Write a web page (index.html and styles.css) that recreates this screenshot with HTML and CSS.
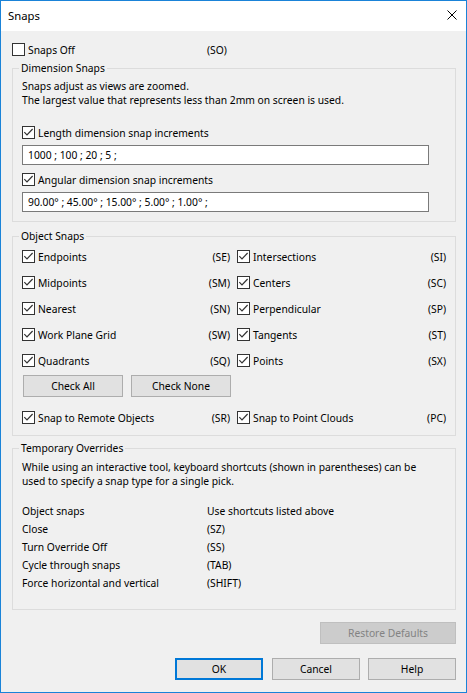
FILE: index.html
```html
<!DOCTYPE html>
<html>
<head>
<meta charset="utf-8">
<title>Snaps</title>
<link rel="stylesheet" href="styles.css">
</head>
<body>
<div class="window">
  <div class="titlebar">
    <span class="title">Snaps</span>
    <svg class="close" width="10" height="10" viewBox="0 0 10 10"><path d="M0.5 0.5L9.5 9.5M9.5 0.5L0.5 9.5" stroke="#000" stroke-width="1" fill="none"/></svg>
  </div>
  <div class="content">
    <div class="top-row">
      <label class="check wide"><svg class="cb" width="13" height="13" viewBox="0 0 13 13"><rect x="0.5" y="0.5" width="12" height="12" fill="#fff" stroke="#333"/></svg><span>Snaps Off</span></label>
      <span class="sc">(SO)</span>
    </div>

    <fieldset class="group dim">
      <legend>Dimension Snaps</legend>
      <p class="note">Snaps adjust as views are zoomed.<br>The largest value that represents less than 2mm on screen is used.</p>
      <label class="check cb-row first"><svg class="cb" width="13" height="13" viewBox="0 0 13 13"><rect x="0.5" y="0.5" width="12" height="12" fill="#fff" stroke="#333"/><path d="M2.3 6.2L5 9L10.6 3" stroke="#333" stroke-width="1.2" fill="none"/></svg><span>Length dimension snap increments</span></label>
      <div class="field">1000 ; 100 ; 20 ; 5 ;</div>
      <label class="check cb-row second"><svg class="cb" width="13" height="13" viewBox="0 0 13 13"><rect x="0.5" y="0.5" width="12" height="12" fill="#fff" stroke="#333"/><path d="M2.3 6.2L5 9L10.6 3" stroke="#333" stroke-width="1.2" fill="none"/></svg><span>Angular dimension snap increments</span></label>
      <div class="field">90.00° ; 45.00° ; 15.00° ; 5.00° ; 1.00° ;</div>
    </fieldset>

    <fieldset class="group obj">
      <legend>Object Snaps</legend>
      <div class="snap-grid">
        <div class="snap"><svg class="cb" width="13" height="13" viewBox="0 0 13 13"><rect x="0.5" y="0.5" width="12" height="12" fill="#fff" stroke="#333"/><path d="M2.3 6.2L5 9L10.6 3" stroke="#333" stroke-width="1.2" fill="none"/></svg><span class="lbl">Endpoints</span><span class="sc">(SE)</span></div>
        <div class="snap"><svg class="cb" width="13" height="13" viewBox="0 0 13 13"><rect x="0.5" y="0.5" width="12" height="12" fill="#fff" stroke="#333"/><path d="M2.3 6.2L5 9L10.6 3" stroke="#333" stroke-width="1.2" fill="none"/></svg><span class="lbl">Intersections</span><span class="sc">(SI)</span></div>
        <div class="snap"><svg class="cb" width="13" height="13" viewBox="0 0 13 13"><rect x="0.5" y="0.5" width="12" height="12" fill="#fff" stroke="#333"/><path d="M2.3 6.2L5 9L10.6 3" stroke="#333" stroke-width="1.2" fill="none"/></svg><span class="lbl">Midpoints</span><span class="sc">(SM)</span></div>
        <div class="snap"><svg class="cb" width="13" height="13" viewBox="0 0 13 13"><rect x="0.5" y="0.5" width="12" height="12" fill="#fff" stroke="#333"/><path d="M2.3 6.2L5 9L10.6 3" stroke="#333" stroke-width="1.2" fill="none"/></svg><span class="lbl">Centers</span><span class="sc">(SC)</span></div>
        <div class="snap"><svg class="cb" width="13" height="13" viewBox="0 0 13 13"><rect x="0.5" y="0.5" width="12" height="12" fill="#fff" stroke="#333"/><path d="M2.3 6.2L5 9L10.6 3" stroke="#333" stroke-width="1.2" fill="none"/></svg><span class="lbl">Nearest</span><span class="sc">(SN)</span></div>
        <div class="snap"><svg class="cb" width="13" height="13" viewBox="0 0 13 13"><rect x="0.5" y="0.5" width="12" height="12" fill="#fff" stroke="#333"/><path d="M2.3 6.2L5 9L10.6 3" stroke="#333" stroke-width="1.2" fill="none"/></svg><span class="lbl">Perpendicular</span><span class="sc">(SP)</span></div>
        <div class="snap"><svg class="cb" width="13" height="13" viewBox="0 0 13 13"><rect x="0.5" y="0.5" width="12" height="12" fill="#fff" stroke="#333"/><path d="M2.3 6.2L5 9L10.6 3" stroke="#333" stroke-width="1.2" fill="none"/></svg><span class="lbl">Work Plane Grid</span><span class="sc">(SW)</span></div>
        <div class="snap"><svg class="cb" width="13" height="13" viewBox="0 0 13 13"><rect x="0.5" y="0.5" width="12" height="12" fill="#fff" stroke="#333"/><path d="M2.3 6.2L5 9L10.6 3" stroke="#333" stroke-width="1.2" fill="none"/></svg><span class="lbl">Tangents</span><span class="sc">(ST)</span></div>
        <div class="snap"><svg class="cb" width="13" height="13" viewBox="0 0 13 13"><rect x="0.5" y="0.5" width="12" height="12" fill="#fff" stroke="#333"/><path d="M2.3 6.2L5 9L10.6 3" stroke="#333" stroke-width="1.2" fill="none"/></svg><span class="lbl">Quadrants</span><span class="sc">(SQ)</span></div>
        <div class="snap"><svg class="cb" width="13" height="13" viewBox="0 0 13 13"><rect x="0.5" y="0.5" width="12" height="12" fill="#fff" stroke="#333"/><path d="M2.3 6.2L5 9L10.6 3" stroke="#333" stroke-width="1.2" fill="none"/></svg><span class="lbl">Points</span><span class="sc">(SX)</span></div>
      </div>
      <div class="check-btns">
        <button class="btn">Check All</button>
        <button class="btn">Check None</button>
      </div>
      <div class="snap-grid remote">
        <div class="snap"><svg class="cb" width="13" height="13" viewBox="0 0 13 13"><rect x="0.5" y="0.5" width="12" height="12" fill="#fff" stroke="#333"/><path d="M2.3 6.2L5 9L10.6 3" stroke="#333" stroke-width="1.2" fill="none"/></svg><span class="lbl">Snap to Remote Objects</span><span class="sc">(SR)</span></div>
        <div class="snap"><svg class="cb" width="13" height="13" viewBox="0 0 13 13"><rect x="0.5" y="0.5" width="12" height="12" fill="#fff" stroke="#333"/><path d="M2.3 6.2L5 9L10.6 3" stroke="#333" stroke-width="1.2" fill="none"/></svg><span class="lbl">Snap to Point Clouds</span><span class="sc">(PC)</span></div>
      </div>
    </fieldset>

    <fieldset class="group temp">
      <legend>Temporary Overrides</legend>
      <p class="note">While using an interactive tool, keyboard shortcuts (shown in parentheses) can be<br>used to specify a snap type for a single pick.</p>
      <div class="ovr">
        <span>Object snaps</span><span>Use shortcuts listed above</span>
        <span>Close</span><span>(SZ)</span>
        <span>Turn Override Off</span><span>(SS)</span>
        <span>Cycle through snaps</span><span>(TAB)</span>
        <span>Force horizontal and vertical</span><span>(SHIFT)</span>
      </div>
    </fieldset>

    <div class="restore-row">
      <button class="btn restore" disabled>Restore Defaults</button>
    </div>
    <div class="footer">
      <button class="btn action ok">OK</button>
      <button class="btn action">Cancel</button>
      <button class="btn action">Help</button>
    </div>
  </div>
</div>
</body>
</html>
```

FILE: styles.css
```css
* { box-sizing: border-box; }

html, body {
  margin: 0;
  padding: 0;
  background: #f0f0f0;
}

body {
  font-family: "Noto Sans", "Open Sans", sans-serif;
  font-size: 10.3px;
  color: #000;
}

.window {
  width: 467px;
  height: 693px;
  border: 1px solid #1a83d8;
  background: #f0f0f0;
  overflow: hidden;
}

.titlebar {
  height: 30px;
  background: #fff;
  display: flex;
  justify-content: space-between;
  align-items: flex-start;
}

.title {
  font-size: 11.3px;
  line-height: 30px;
  padding-left: 7px;
}

.close {
  display: block;
  margin-top: 9px;
  margin-right: 9px;
}

.content {
  padding: 12px 10px 0 11px;
}

.check {
  display: flex;
  align-items: center;
  height: 13px;
  line-height: 14px;
  white-space: nowrap;
}

.cb {
  display: block;
  flex: none;
  margin-right: 3px;
}

.top-row {
  display: flex;
  align-items: center;
  height: 13px;
  line-height: 14px;
}

.top-row .wide { width: 195px; }

.group {
  margin: 0;
  min-width: 0;
  border: 1px solid #dcdcdc;
  padding: 0 9px;
}

.group legend {
  padding: 0 2px;
  margin-left: -3px;
  line-height: 15px;
}

.note {
  margin: 0;
  line-height: 14px;
  white-space: nowrap;
}

.dim {
  margin-top: 5px;
  padding-top: 3px;
  padding-bottom: 9px;
}

.cb-row.first { margin-top: 19px; }
.cb-row.second { margin-top: 8px; }

.field {
  margin-top: 6px;
  width: 407px;
  height: 20px;
  border: 1px solid #7a7a7a;
  background: #fff;
  padding-left: 5px;
  line-height: 18px;
  white-space: nowrap;
}

.obj {
  margin-top: 7px;
  padding-top: 6px;
  padding-bottom: 11px;
}

.snap-grid {
  display: grid;
  grid-template-columns: 208px 209px;
  column-gap: 7px;
  row-gap: 13px;
}

.snap {
  display: flex;
  align-items: center;
  height: 13px;
  line-height: 14px;
  white-space: nowrap;
}

.snap .sc { margin-left: auto; }

.check-btns {
  display: flex;
  gap: 8px;
  margin-top: 8px;
  margin-left: 1px;
}

.btn {
  font: inherit;
  color: #000;
  height: 22px;
  border: 1px solid #adadad;
  background: #e1e1e1;
  padding: 0;
  line-height: 20px;
  margin: 0;
  border-radius: 0;
}

.check-btns .btn { width: 100px; }

.remote { margin-top: 14px; }

.temp {
  margin-top: 5px;
  padding-top: 4px;
  padding-bottom: 17px;
}

.ovr {
  margin-top: 14px;
  display: grid;
  grid-template-columns: 185px auto;
  grid-auto-rows: 18px;
  line-height: 18px;
  white-space: nowrap;
}

.restore-row {
  display: flex;
  justify-content: flex-end;
  margin-top: 12px;
}

.restore {
  width: 136px;
  background: #cccccc;
  border-color: #bfbfbf;
  color: #838383;
}

.footer {
  display: flex;
  justify-content: flex-end;
  gap: 8px;
  margin-top: 14px;
}

.action { width: 88px; }

.ok {
  border: 2px solid #0078d7;
  line-height: 18px;
  margin-right: 1px;
}
```
